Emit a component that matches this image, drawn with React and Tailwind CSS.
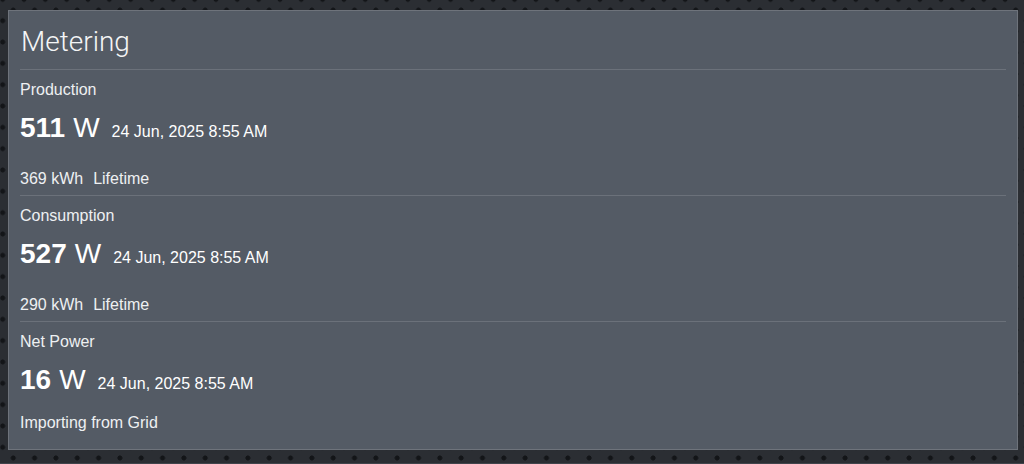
import React from "react";

const sections = [
  { label: "Production", value: "511", small: ["369 kWh", "Lifetime"] },
  { label: "Consumption", value: "527", small: ["290 kWh", "Lifetime"] },
  { label: "Net Power", value: "16", small: ["Importing from Grid"], last: true },
];

function Section({ label, value, small, last }) {
  return (
    <div className="border-t border-[#6b717a] pt-[10px]">
      <div className="text-[16px] leading-[20px] text-[#eef0f2]">{label}</div>
      <div className="mt-[10px] flex h-[36px] items-baseline leading-[36px] text-white">
        <span className="text-[28px] font-bold">{value}</span>
        <span className="ml-[8px] text-[28px]">W</span>
        <span className="ml-[12px] text-[16px] leading-none">24 Jun, 2025 8:55 AM</span>
      </div>
      <div
        className={
          "flex gap-[10px] text-[16px] leading-[20px] text-[#eef0f2] " +
          (last ? "mt-[15px]" : "mt-[23px] mb-[6px]")
        }
      >
        {small.map((s) => (
          <span key={s}>{s}</span>
        ))}
      </div>
    </div>
  );
}

export default function App() {
  return (
    <div
      className="h-[464px] w-[1024px] overflow-hidden border-b border-[#40444b] bg-[#2b2e33] bg-[radial-gradient(circle,#131518_2.2px,transparent_2.8px),radial-gradient(circle,#131518_2.2px,transparent_2.8px)] bg-[length:21.33px_21.33px] bg-[position:-8px_-11.3px,2.6px_-0.6px] pt-[10px] pl-[8px]"
      style={{ fontFamily: '"Liberation Sans", Arial, sans-serif' }}
    >
      <div className="h-[440px] w-[1010px] border border-[#6e737b] bg-[#545b65] px-[11px] pt-[11px]">
        <h1
          className="mb-[7px] pl-[1px] text-[28px] font-light leading-[40px] text-[#f4f5f6]"
          style={{ fontFamily: 'Roboto, "Liberation Sans", sans-serif' }}
        >
          Metering
        </h1>
        {sections.map((s) => (
          <Section key={s.label} {...s} />
        ))}
      </div>
    </div>
  );
}
